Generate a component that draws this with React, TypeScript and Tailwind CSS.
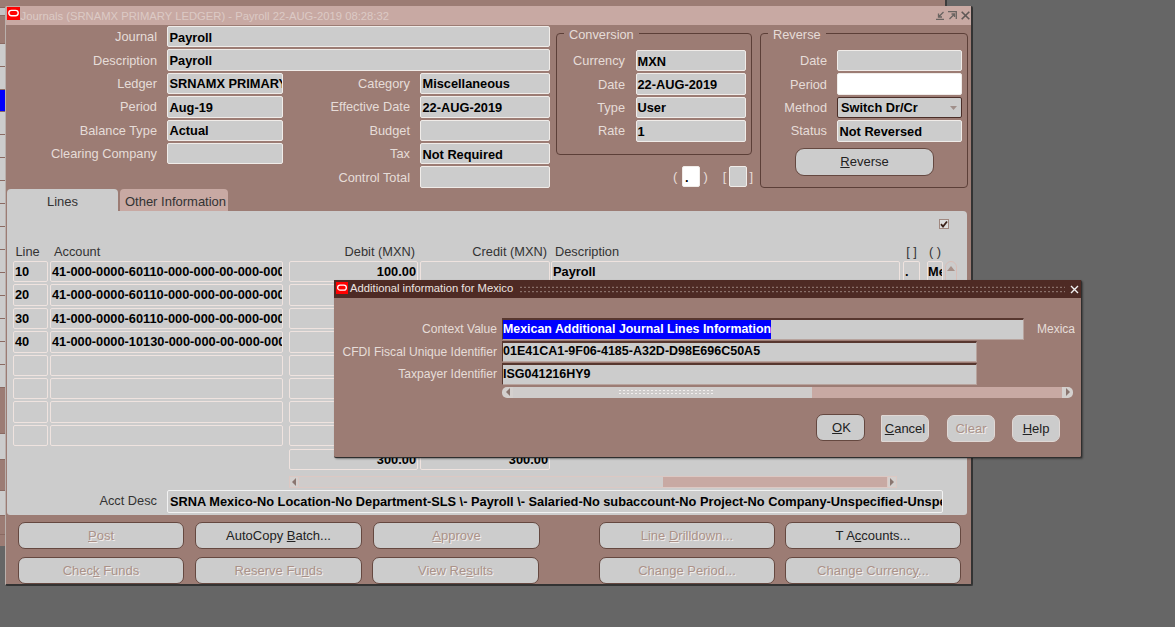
import type { ReactNode } from "react";

const DISABLED = "text-[#ab9289] [text-shadow:1px_1px_0_#f2eeec]";

// Types
type ChildProps = { className?: string; children?: ReactNode };

function OracleIcon({ className = "" }: { className?: string }) {
  return (
    <svg viewBox="0 0 13 13" className={`shrink-0 ${className}`}>
      <rect width="13" height="13" fill="#ff0000" />
      <rect x="1.8" y="3.4" width="9.4" height="5.4" rx="2.7" fill="none" stroke="#fff" strokeWidth="1.4" />
    </svg>
  );
}

function Label({ className = "", children }: ChildProps) {
  return (
    <div className={`shrink-0 pt-[2px] text-right text-[12.8px] leading-none text-[#e6dcd8] whitespace-nowrap ${className}`}>
      {children}
    </div>
  );
}

function Field({ className = "", children }: ChildProps) {
  return (
    <div
      className={`flex h-[21.4px] shrink-0 items-center overflow-hidden whitespace-nowrap rounded-[2px] border border-[#f0ece9] bg-[#cccccc] px-[1.5px] pt-[1px] text-[12.8px] font-bold text-black ${className}`}
    >
      {children}
    </div>
  );
}

function Cell({ className = "", children }: ChildProps) {
  return (
    <div
      className={`flex h-[21.4px] shrink-0 items-center overflow-hidden whitespace-nowrap rounded-[2px] border border-[#efe3df] bg-[#cccccc] px-[1px] text-[12.8px] font-bold text-black ${className}`}
    >
      {children}
    </div>
  );
}

function DialogField({ className = "", children }: ChildProps) {
  return (
    <div
      className={`flex h-[21.5px] shrink-0 items-center overflow-hidden whitespace-nowrap border-t-2 border-l border-r border-b border-t-[#57372f] border-l-[#57372f] border-r-[#b7a39d] border-b-[#b7a39d] bg-[#cccccc] px-0 text-[12.5px] font-bold text-black ${className}`}
    >
      {children}
    </div>
  );
}

function Btn({ className = "", children }: ChildProps) {
  return (
    <div
      className={`flex h-[27px] shrink-0 items-center justify-center rounded-[7px] border border-[#654840] bg-[#cccccc] text-[13px] leading-none ${className}`}
    >
      {children}
    </div>
  );
}

function ArrowCell({ dir, className = "" }: { dir: "left" | "right"; className?: string }) {
  return (
    <div className={`flex shrink-0 items-center justify-center bg-[#d4d0ce] ${className}`}>
      <svg viewBox="0 0 6 8" className="h-[8px] w-[6px]">
        <polygon points={dir === "left" ? "5,0 5,8 1,4" : "1,0 1,8 5,4"} fill="#8a7670" />
      </svg>
    </div>
  );
}

const rows = [
  { line: "10", account: "41-000-0000-60110-000-000-00-000-000", debit: "100.00", desc: "Payroll", a: ".", b: "Me" },
  { line: "20", account: "41-000-0000-60110-000-000-00-000-000" },
  { line: "30", account: "41-000-0000-60110-000-000-00-000-000" },
  { line: "40", account: "41-000-0000-10130-000-000-00-000-000" },
  {},
  {},
  {},
  {},
] as { line?: string; account?: string; debit?: string; desc?: string; a?: string; b?: string }[];

// Slivers of the window behind, on the left edge
const strip = [
  "h-[8px] bg-[#9c7c74]",
  "h-[8px] bg-[#c4c4c4]",
  "h-[28px] bg-[#9c7c74]",
  "h-[23px] bg-[#cccccc]",
  "h-[23px] bg-[#cccccc]",
  "h-[22px] bg-[#0000ff]",
  "h-[23px] bg-[#cccccc]",
  "h-[23px] bg-[#cccccc]",
  "h-[23px] bg-[#cccccc]",
  "h-[23px] bg-[#cccccc]",
  "h-[23px] bg-[#cccccc]",
  "h-[23px] bg-[#cccccc]",
  "h-[23px] bg-[#cccccc]",
  "h-[23px] bg-[#cccccc]",
  "h-[23px] bg-[#cccccc]",
  "h-[23px] bg-[#cccccc]",
  "h-[23px] bg-[#cccccc]",
  "h-[23px] bg-[#cccccc]",
  "h-[46px] bg-[#9c7c74]",
  "h-[26px] bg-[#cccccc]",
  "h-[31px] bg-[#9c7c74]",
  "h-[25px] bg-[#cccccc]",
  "h-[19px] bg-[#9c7c74]",
];

export default function App() {
  return (
    <div className="relative h-[627px] w-[1175px] overflow-hidden bg-[#666666] font-['Liberation_Sans',Arial,sans-serif]">
      {/* Window behind */}
      <div className="absolute left-0 top-0 h-[546px] w-[947px] border-r-2 border-[#3c3c3c] bg-[#9c7c74]">
        <div className="flex w-[5px] flex-col">
          {strip.map((c, i) => (
            <div key={i} className={`shrink-0 border-b border-[#8a6a62] ${c}`} />
          ))}
        </div>
      </div>

      {/* Journals window */}
      <div className="absolute left-[5px] top-[6px] h-[580px] w-[968px] rounded-[2px] border-l border-r-2 border-b-2 border-l-[#b9b0ac] border-r-[#333333] border-b-[#333333] bg-[#9c7c74]">
        {/* Title bar */}
        <div className="flex h-[19px] items-start bg-[#c8a9a3] pl-[1px] pt-[1px]">
          <OracleIcon className="h-[13px] w-[13px]" />
          <div className="ml-[0.5px] pt-[1px] text-[11.25px] leading-[17px] text-[#dcc9c5]">
            Journals (SRNAMX PRIMARY LEDGER) - Payroll 22-AUG-2019 08:28:32
          </div>
          <div className="ml-auto mr-[1px] mt-[4px] flex items-center gap-[3px]">
            <svg viewBox="0 0 9 9" className="h-[9px] w-[9px]" fill="none" stroke="#6a6461" strokeWidth="1.3">
              <path d="M0 8.3h8M7.5 1 2.5 6M2.5 2.5V6H6" />
            </svg>
            <svg viewBox="0 0 9 9" className="h-[9px] w-[9px]" fill="none" stroke="#6a6461" strokeWidth="1.3">
              <path d="M0 .7h8.3V8M6.5 3 1.5 8M3.5 3h3v3" />
            </svg>
            <svg viewBox="0 0 9 9" className="ml-[1px] h-[9px] w-[9px]" fill="none" stroke="#5e5856" strokeWidth="1.6">
              <path d="M.7.7l7.6 7.6M8.3.7.7 8.3" />
            </svg>
          </div>
        </div>

        {/* Header block */}
        <div className="flex h-[164px] pl-[1px]">
          <div className="flex w-[543px] flex-col gap-[2px] pt-[1px]">
            <div className="flex items-center">
              <Label className="mr-[10px] w-[150px]">Journal</Label>
              <Field className="w-[383px]">Payroll</Field>
            </div>
            <div className="flex items-center">
              <Label className="mr-[10px] w-[150px]">Description</Label>
              <Field className="w-[383px]">Payroll</Field>
            </div>
            <div className="flex items-center">
              <Label className="mr-[10px] w-[150px]">Ledger</Label>
              <Field className="w-[116px]">SRNAMX PRIMARY LEDGER</Field>
              <Label className="mr-[10px] w-[127px]">Category</Label>
              <Field className="w-[130px]">Miscellaneous</Field>
            </div>
            <div className="flex items-center">
              <Label className="mr-[10px] w-[150px]">Period</Label>
              <Field className="w-[116px]">Aug-19</Field>
              <Label className="mr-[10px] w-[127px]">Effective Date</Label>
              <Field className="w-[130px]">22-AUG-2019</Field>
            </div>
            <div className="flex items-center">
              <Label className="mr-[10px] w-[150px]">Balance Type</Label>
              <Field className="w-[116px]">Actual</Field>
              <Label className="mr-[10px] w-[127px]">Budget</Label>
              <Field className="w-[130px]" />
            </div>
            <div className="flex items-center">
              <Label className="mr-[10px] w-[150px]">Clearing Company</Label>
              <Field className="w-[116px]" />
              <Label className="mr-[10px] w-[127px]">Tax</Label>
              <Field className="w-[130px]">Not Required</Field>
            </div>
            <div className="flex items-center">
              <Label className="mr-[10px] w-[403px]">Control Total</Label>
              <Field className="w-[130px]" />
            </div>
          </div>

          {/* Conversion */}
          <div className="ml-[6px] flex w-[196px] flex-col">
            <div className="relative mt-[8px] flex h-[122px] flex-col gap-[2px] rounded-[4px] border border-[#5c3f38] pt-[16px]">
              <div className="absolute -top-[7px] left-[7px] bg-[#9c7c74] px-[5px] text-[12.8px] leading-[15px] text-[#e6dcd8]">
                Conversion
              </div>
              {[
                ["Currency", "MXN"],
                ["Date", "22-AUG-2019"],
                ["Type", "User"],
                ["Rate", "1"],
              ].map(([l, v]) => (
                <div key={l} className="flex items-center">
                  <Label className="mr-[11px] w-[68px]">{l}</Label>
                  <Field className="w-[110px] pl-[0.5px]">{v}</Field>
                </div>
              ))}
            </div>
            <div className="mt-[11px] flex items-center justify-end text-[13px] text-[#e6dcd8]">
              <span>(</span>
              <Field className="ml-[5px] w-[18px] !bg-white">.</Field>
              <span className="ml-[3px]">)</span>
              <span className="ml-[15px]">[</span>
              <Field className="ml-[3px] w-[18px]" />
              <span className="ml-[2px] mr-[-1px]">]</span>
            </div>
          </div>

          {/* Reverse */}
          <div className="relative ml-[8px] mt-[8px] flex h-[155px] w-[208px] flex-col gap-[2px] rounded-[4px] border border-[#5c3f38] pt-[16px]">
            <div className="absolute -top-[7px] left-[7px] bg-[#9c7c74] px-[5px] text-[12.8px] leading-[15px] text-[#e6dcd8]">
              Reverse
            </div>
            <div className="flex items-center">
              <Label className="mr-[10px] w-[66px]">Date</Label>
              <Field className="w-[125px]" />
            </div>
            <div className="flex items-center">
              <Label className="mr-[10px] w-[66px]">Period</Label>
              <Field className="w-[125px] !bg-white" />
            </div>
            <div className="flex items-center">
              <Label className="mr-[10px] w-[66px]">Method</Label>
              <Field className="w-[125px] justify-between !border-[#4a2e28] pl-[3px] pr-[4px]">
                Switch Dr/Cr
                <svg viewBox="0 0 7 4" className="h-[4px] w-[7px]">
                  <polygon points="0,0 7,0 3.5,4" fill="#a08f8a" />
                </svg>
              </Field>
            </div>
            <div className="flex items-center">
              <Label className="mr-[10px] w-[66px]">Status</Label>
              <Field className="w-[125px]">Not Reversed</Field>
            </div>
            <Btn className="ml-[34px] mt-[4px] h-[28px] w-[139px] rounded-[9px] text-[#222222]">
              <span><u>R</u>everse</span>
            </Btn>
          </div>
        </div>

        {/* Tabs */}
        <div className="ml-[1px] flex h-[22px] items-end text-[13px] leading-none text-[#333333]">
          <div className="flex h-[22px] w-[111px] items-center justify-center rounded-t-[4px] bg-[#cccccc] pt-[2px]">
            Lines
          </div>
          <div className="ml-[2px] flex h-[22px] w-[108px] items-center justify-center rounded-t-[4px] bg-[#c8a9a3] pl-[3px] pt-[2px]">
            Other Information
          </div>
        </div>

        {/* Tab panel */}
        <div className="ml-[1px] h-[304px] w-[960px] rounded-b-[3px] rounded-tr-[4px] bg-[#cccccc] text-[#333333]">
          <div className="flex justify-end pr-[18px] pt-[8px]">
            <div className="flex h-[10px] w-[10px] items-center justify-center border border-[#a08880] bg-[#dddddd]">
              <svg viewBox="0 0 8 8" className="h-[8px] w-[8px]" fill="none" stroke="#3a2018" strokeWidth="1.8">
                <path d="M1 4.2 3 6.5 7 1.5" />
              </svg>
            </div>
          </div>

          {/* Column headings */}
          <div className="mt-[15px] flex h-[16px] items-center pl-[5.5px] text-[12.8px] leading-none">
            <div className="w-[35.5px] pl-[3px]">Line</div>
            <div className="ml-[2px] w-[233px] pl-[4px]">Account</div>
            <div className="ml-[6px] w-[129px] pr-[3px] text-right">Debit (MXN)</div>
            <div className="ml-[2px] w-[130px] pr-[3px] text-right">Credit (MXN)</div>
            <div className="ml-[1px] w-[349px] pl-[4px]">Description</div>
            <div className="ml-[3px] w-[17px] text-center">[ ]</div>
            <div className="ml-[7px] w-[16px] text-center">( )</div>
          </div>

          <div className="mt-[1px] flex pl-[5.5px]">
            <div className="flex flex-col gap-[2px]">
              {rows.map((r, i) => (
                <div key={i} className="flex">
                  <Cell className="w-[35.5px] pl-[1.5px]">{r.line}</Cell>
                  <Cell className="ml-[2px] w-[233px]">{r.account}</Cell>
                  <Cell className="ml-[6px] w-[129px] justify-end">{r.debit}</Cell>
                  <Cell className="ml-[2px] w-[130px] justify-end" />
                  <Cell className="ml-[1px] w-[349px]">{r.desc}</Cell>
                  <Cell className="ml-[3px] w-[17px]">{r.a}</Cell>
                  <Cell className="ml-[7px] w-[16px] !px-0">{r.b}</Cell>
                </div>
              ))}
            </div>
            <div className="ml-[2px] flex h-[186px] w-[12px] justify-center rounded-t-[6px] border border-[#d8bdb7] pt-[4px]">
              <svg viewBox="0 0 8 5" className="h-[5px] w-[8px]">
                <polygon points="0,5 8,5 4,0" fill="#a89088" />
              </svg>
            </div>
          </div>

          {/* Totals */}
          <div className="mt-[2px] flex pl-[282px]">
            <Cell className="w-[129px] justify-end">300.00</Cell>
            <Cell className="ml-[2px] w-[130px] justify-end">300.00</Cell>
          </div>

          {/* Horizontal scrollbar */}
          <div className="ml-[282px] mt-[6px] flex h-[12px] w-[608px] border-y border-[#dcc8c3]">
            <ArrowCell dir="left" className="w-[10px] border-x border-[#dcc8c3]" />
            <div className="w-[364px] bg-[#cfcccb]" />
            <div className="w-[224px] bg-[#c8a9a3]" />
            <ArrowCell dir="right" className="w-[10px] border-x border-[#dcc8c3]" />
          </div>

          {/* Acct Desc */}
          <div className="mt-[2px] flex items-center">
            <div className="mr-[10px] w-[150px] text-right text-[12.8px] leading-none">Acct Desc</div>
            <div className="flex h-[23px] w-[776px] items-center overflow-hidden whitespace-nowrap rounded-[2px] border border-[#f2f2f2] bg-[#cccccc] px-[2px] text-[12.8px] font-bold text-black">
              SRNA Mexico-No Location-No Department-SLS \- Payroll \- Salaried-No subaccount-No Project-No Company-Unspecified-Unspecified
            </div>
          </div>
        </div>

        {/* Button rows */}
        <div className="mt-[7px] flex pl-[12px]">
          <Btn className={`w-[166px] ${DISABLED}`}><span><u>P</u>ost</span></Btn>
          <Btn className="ml-[11px] w-[167px] text-[#222222]"><span>AutoCopy <u>B</u>atch...</span></Btn>
          <Btn className={`ml-[11px] w-[167px] ${DISABLED}`}><span><u>A</u>pprove</span></Btn>
          <Btn className={`ml-[59px] w-[176px] ${DISABLED}`}><span>Line <u>D</u>rilldown...</span></Btn>
          <Btn className="ml-[10px] w-[176px] text-[#222222]"><span>T A<u>c</u>counts...</span></Btn>
        </div>
        <div className="mt-[8px] flex pl-[12px]">
          <Btn className={`w-[166px] ${DISABLED}`}><span>Chec<u>k</u> Funds</span></Btn>
          <Btn className={`ml-[11px] w-[167px] ${DISABLED}`}><span>Reserve Fu<u>n</u>ds</span></Btn>
          <Btn className={`ml-[10px] w-[167px] ${DISABLED}`}><span>View Re<u>s</u>ults</span></Btn>
          <Btn className={`ml-[60px] w-[176px] ${DISABLED}`}><span>Change Period...</span></Btn>
          <Btn className={`ml-[10px] w-[176px] ${DISABLED}`}><span>Change Currenc<u>y</u>...</span></Btn>
        </div>
      </div>

      {/* Additional information dialog */}
      <div className="absolute left-[334px] top-[280px] h-[178px] w-[748px] rounded-[2px] border-r border-b border-[#2e2e2e] bg-[#9c7c74] shadow-[1px_1px_2px_rgba(0,0,0,0.4)]">
        <div className="flex h-[18px] items-center bg-[#4e2a24] pl-[2px]">
          <OracleIcon className="h-[12px] w-[12px] -translate-y-[1px]" />
          <div className="ml-[2px] w-[162px] shrink-0 whitespace-nowrap text-[11.25px] leading-none text-[#ece4e1]">Additional information for Mexico</div>
          <div className="ml-[7px] h-[9px] w-[546px] bg-[radial-gradient(circle,#a08a84_0.8px,transparent_1px)] bg-[length:4px_4.5px]" />
          <svg viewBox="0 0 9 9" className="ml-[5px] h-[9px] w-[9px]" fill="none" stroke="#f2f2f2" strokeWidth="1.4">
            <path d="M1 1l7 7M8 1 1 8" />
          </svg>
        </div>

        <div className="mt-[20px] flex flex-col gap-[1px]">
          <div className="flex items-center">
            <Label className="mr-[5px] w-[163px] !pt-[1px] !text-[12.1px]">Context Value</Label>
            <DialogField className="w-[522px]">
              <span className="bg-[#0000ff] text-[12.4px] text-white">Mexican Additional Journal Lines Information</span>
            </DialogField>
            <div className="ml-[13px] w-[38px] overflow-hidden whitespace-nowrap text-[12px] leading-none text-[#e6dcd8]">Mexican</div>
          </div>
          <div className="flex items-center">
            <Label className="mr-[5px] w-[163px] !pt-[1px] !text-[12.1px]">CFDI Fiscal Unique Identifier</Label>
            <DialogField className="w-[475px]">01E41CA1-9F06-4185-A32D-D98E696C50A5</DialogField>
          </div>
          <div className="flex items-center">
            <Label className="mr-[5px] w-[163px] !pt-[1px] !text-[12.1px]">Taxpayer Identifier</Label>
            <DialogField className="w-[475px]">ISG041216HY9</DialogField>
          </div>
        </div>

        <div className="ml-[168px] mt-[2px] flex h-[11px] w-[571px]">
          <ArrowCell dir="left" className="w-[11px] rounded-l-[5px]" />
          <div className="flex w-[299px] items-center justify-center bg-[#cfcccb]">
            <div className="ml-[6px] h-[6px] w-[96px] bg-[radial-gradient(circle,#f2efee_0.8px,transparent_1px)] bg-[length:4px_3px]" />
          </div>
          <div className="w-[250px] bg-[#c8a9a3]" />
          <ArrowCell dir="right" className="w-[11px] rounded-r-[5px]" />
        </div>

        <div className="ml-[482px] mt-[16px] flex items-start">
          <Btn className="h-[26px] w-[49px] border-[#2e2e2e] pl-[2px] text-[#222222]"><span><u>O</u>K</span></Btn>
          <Btn className="ml-[16px] mt-[1px] h-[23px] w-[48px] rounded-l-[1px] border-[#e0d8d5] text-[#222222]"><span><u>C</u>ancel</span></Btn>
          <Btn className={`ml-[18px] mt-[1px] h-[23px] w-[48px] border-[#e0d8d5] ${DISABLED}`}>Clear</Btn>
          <Btn className="ml-[17px] mt-[1px] h-[23px] w-[48px] border-[#e0d8d5] text-[#222222]"><span><u>H</u>elp</span></Btn>
        </div>
      </div>
    </div>
  );
}
